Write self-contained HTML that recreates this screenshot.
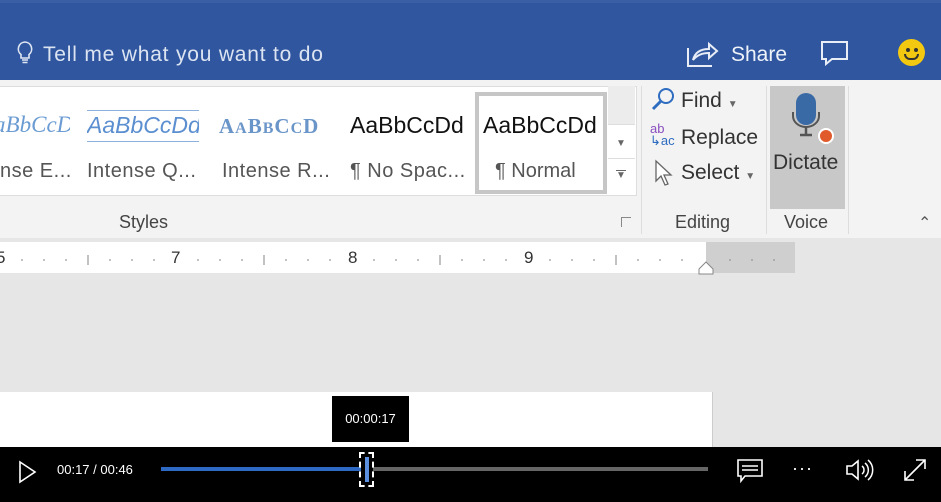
<!DOCTYPE html><html><head><style>
body{margin:0;width:941px;height:502px;overflow:hidden;background:#e6e6e6;font-family:"Liberation Sans",sans-serif;position:relative}
.a{position:absolute}
</style></head><body>
<div class="a" style="left:0;top:0;width:941px;height:80px;background:#2f569f"></div>
<div class="a" style="left:0;top:0;width:941px;height:3px;background:#3a5fa5"></div>
<svg class="a" style="left:14px;top:40px" width="22" height="26" viewBox="0 0 22 26"><path d="M11 2a7 7 0 0 0-4 12.5V18h8v-3.5A7 7 0 0 0 11 2z" fill="none" stroke="#dfe6f3" stroke-width="1.6"/><path d="M8 20h6M8.5 22.5h5" stroke="#dfe6f3" stroke-width="1.6"/></svg>
<div class="a" style="left:43px;top:43px;color:#dce4f2;font-size:21px;letter-spacing:0.8px">Tell me what you want to do</div>
<svg class="a" style="left:686px;top:40px" width="34" height="28" viewBox="0 0 34 28"><path d="M2 8v18h24" fill="none" stroke="#e8edf6" stroke-width="2"/><path d="M7 20c2-8 8-11 16-11V4l8 7-8 7v-5c-7 0-12 2-16 7z" fill="none" stroke="#e8edf6" stroke-width="2"/></svg>
<div class="a" style="left:731px;top:43px;color:#eef2f9;font-size:21px">Share</div>
<svg class="a" style="left:820px;top:40px" width="30" height="26" viewBox="0 0 30 26"><path d="M2 2h25v17H12l-6 5v-5H2z" fill="none" stroke="#e8edf6" stroke-width="2"/></svg>
<div class="a" style="left:898px;top:39px;width:27px;height:27px;border-radius:50%;background:#f2c811"></div>
<div class="a" style="left:906px;top:48px;width:4px;height:4px;border-radius:50%;background:#333"></div>
<div class="a" style="left:914px;top:48px;width:4px;height:4px;border-radius:50%;background:#333"></div>
<div class="a" style="left:904px;top:54px;width:15px;height:6px;border:2px solid #333;border-top:none;border-radius:0 0 10px 10px;box-sizing:border-box"></div>

<div class="a" style="left:0;top:80px;width:941px;height:158px;background:#f3f3f3"></div>
<div class="a" style="left:0;top:86px;width:636px;height:108px;background:#fff;border:1px solid #ddd;border-left:none"></div>
<div class="a" style="left:0;top:112px;color:#6a9bd2;font:italic 23px 'Liberation Serif',serif;width:70px;overflow:hidden;white-space:nowrap;text-indent:-20px">AaBbCcDd</div>
<div class="a" style="left:87px;top:110px;width:112px;height:30px;border-top:1px solid #8db2e0;border-bottom:1px solid #8db2e0"></div>
<div class="a" style="left:87px;top:112px;color:#5b8fd0;font:italic 23px 'Liberation Sans',sans-serif;width:112px;overflow:hidden;white-space:nowrap">AaBbCcDd</div>
<div class="a" style="left:219px;top:114px;color:#6a95c9;font:bold 21px 'Liberation Serif',serif;width:113px;overflow:hidden;white-space:nowrap;letter-spacing:1px">A<span style="font-size:16px">A</span>B<span style="font-size:16px">B</span>C<span style="font-size:16px">C</span>D</div>
<div class="a" style="left:350px;top:112px;color:#111;font-size:23px;width:115px;overflow:hidden;white-space:nowrap">AaBbCcDd</div>
<div class="a" style="left:475px;top:92px;width:124px;height:94px;border:4px solid #c6c6c6;background:#fff"></div>
<div class="a" style="left:483px;top:112px;color:#111;font-size:23px;width:114px;overflow:hidden;white-space:nowrap">AaBbCcDd</div>
<div class="a" style="left:0;top:160px;color:#555;font-size:20px;white-space:nowrap;letter-spacing:0.5px">nse E...</div>
<div class="a" style="left:87px;top:160px;color:#555;font-size:20px;letter-spacing:0.5px">Intense Q...</div>
<div class="a" style="left:222px;top:160px;color:#555;font-size:20px;letter-spacing:0.5px">Intense R...</div>
<div class="a" style="left:350px;top:160px;color:#555;font-size:20px;letter-spacing:0.5px">¶ No Spac...</div>
<div class="a" style="left:495px;top:160px;color:#555;font-size:20px">¶ Normal</div>
<div class="a" style="left:608px;top:86px;width:27px;height:38px;background:#ececec"></div>
<div class="a" style="left:608px;top:124px;width:27px;height:1px;background:#ddd"></div>
<div class="a" style="left:608px;top:158px;width:27px;height:1px;background:#ddd"></div>
<div class="a" style="left:616px;top:138px;color:#666;font-size:10px">▼</div>
<div class="a" style="left:616px;top:170px;color:#666;font-size:10px;border-top:1px solid #666;line-height:9px">▼</div>
<div class="a" style="left:119px;top:212px;color:#444;font-size:18px">Styles</div>
<div class="a" style="left:621px;top:217px;width:9px;height:9px;border-top:1px solid #888;border-left:1px solid #888"></div>
<div class="a" style="left:641px;top:86px;width:1px;height:148px;background:#ddd"></div>
<div class="a" style="left:766px;top:86px;width:1px;height:148px;background:#ddd"></div>
<div class="a" style="left:848px;top:86px;width:1px;height:148px;background:#ddd"></div>
<svg class="a" style="left:650px;top:86px" width="28" height="28" viewBox="0 0 28 28"><circle cx="16" cy="10" r="7" fill="none" stroke="#2e6cc0" stroke-width="2"/><path d="M11 15l-8 8" stroke="#2e6cc0" stroke-width="3"/></svg>
<div class="a" style="left:681px;top:89px;color:#333;font-size:21px">Find <span style="font-size:10px;color:#666">▼</span></div>
<div class="a" style="left:650px;top:123px;color:#8a4fc0;font-size:13px;line-height:12px">ab<br><span style="color:#2e6cc0">↳ac</span></div>
<div class="a" style="left:681px;top:126px;color:#333;font-size:21px">Replace</div>
<svg class="a" style="left:654px;top:159px" width="20" height="28" viewBox="0 0 20 28"><path d="M2 2v20l5-5 4 9 3-1-4-9h7z" fill="#fff" stroke="#666" stroke-width="1.3"/></svg>
<div class="a" style="left:681px;top:161px;color:#333;font-size:21px">Select <span style="font-size:10px;color:#666">▼</span></div>
<div class="a" style="left:675px;top:212px;color:#444;font-size:18px">Editing</div>
<div class="a" style="left:770px;top:86px;width:75px;height:123px;background:#c8c8c8"></div>
<div class="a" style="left:796px;top:93px;width:20px;height:32px;border-radius:10px;background:#3a6aa6"></div>
<svg class="a" style="left:790px;top:110px" width="32" height="28" viewBox="0 0 32 28"><path d="M3 2v4a13 11 0 0 0 26 0V2" fill="none" stroke="#555" stroke-width="2"/><path d="M16 17v7M10 25h12" stroke="#555" stroke-width="2.5"/></svg>
<div class="a" style="left:818px;top:128px;width:16px;height:16px;border-radius:50%;background:#e05a2b;border:2px solid #fff;box-sizing:border-box"></div>
<div class="a" style="left:773px;top:151px;color:#333;font-size:21px">Dictate</div>
<div class="a" style="left:784px;top:212px;color:#444;font-size:18px">Voice</div>
<div class="a" style="left:918px;top:213px;color:#555;font-size:16px">⌃</div>

<div class="a" style="left:0;top:242px;width:706px;height:31px;background:#fff"></div>
<div class="a" style="left:706px;top:242px;width:89px;height:31px;background:#cfcfcf"></div>
<div class="a" style="left:-4px;top:248px;color:#333;font-size:17px">5</div>
<div class="a" style="left:171px;top:248px;color:#333;font-size:17px">7</div>
<div class="a" style="left:348px;top:248px;color:#333;font-size:17px">8</div>
<div class="a" style="left:524px;top:248px;color:#333;font-size:17px">9</div>
<svg class="a" style="left:0;top:250px" width="795" height="20"><g stroke="#999" stroke-width="1.2"><path d="M22 9v2M44 9v2M66 9v2M110 9v2M132 9v2M154 9v2M198 9v2M220 9v2M242 9v2M286 9v2M308 9v2M330 9v2M374 9v2M396 9v2M418 9v2M462 9v2M484 9v2M506 9v2M550 9v2M572 9v2M594 9v2M638 9v2M660 9v2M682 9v2M730 9v2M752 9v2M774 9v2"/><path d="M88 5v10M264 5v10M440 5v10M616 5v10"/></g></svg>
<svg class="a" style="left:698px;top:261px" width="17" height="14"><path d="M1 13V8l7-7 7 7v5z" fill="#fff" stroke="#888"/></svg>

<div class="a" style="left:0;top:392px;width:712px;height:60px;background:#fff;border-right:1px solid #ccc"></div>
<div class="a" style="left:332px;top:396px;width:77px;height:46px;background:#000;color:#fff;font-size:13px;line-height:46px;text-align:center">00:00:17</div>
<div class="a" style="left:0;top:447px;width:941px;height:55px;background:#000"></div>
<svg class="a" style="left:18px;top:460px" width="20" height="24"><path d="M2 2l15 10L2 22z" fill="none" stroke="#fff" stroke-width="1.6"/></svg>
<div class="a" style="left:57px;top:462px;color:#fff;font-size:13px">00:17 / 00:46</div>
<div class="a" style="left:161px;top:467px;width:200px;height:4px;background:#2e6ac4"></div>
<div class="a" style="left:373px;top:467px;width:335px;height:4px;background:#666"></div>
<div class="a" style="left:359px;top:452px;width:15px;height:35px;border:2px dashed #fff;box-sizing:border-box"></div>
<div class="a" style="left:365px;top:457px;width:4px;height:25px;background:#5b8fe0"></div>
<svg class="a" style="left:736px;top:458px" width="28" height="26"><path d="M2 2h24v16H9l-4 5v-5H2z" fill="none" stroke="#fff" stroke-width="1.6"/><path d="M6 8h16M6 12h16" stroke="#fff" stroke-width="1.5"/></svg>
<div class="a" style="left:792px;top:458px;color:#fff;font-size:18px;letter-spacing:1px">···</div>
<svg class="a" style="left:845px;top:458px" width="30" height="24"><path d="M2 8h5l6-5v18l-6-5H2z" fill="none" stroke="#fff" stroke-width="1.6"/><path d="M17 8a5 5 0 0 1 0 8M20 5a9 9 0 0 1 0 14M23 2a13 13 0 0 1 0 20" fill="none" stroke="#fff" stroke-width="1.5"/></svg>
<svg class="a" style="left:902px;top:457px" width="26" height="26"><path d="M3 23L23 3M14 3h9v9M3 14v9h9" fill="none" stroke="#fff" stroke-width="1.6"/></svg>
</body></html>
